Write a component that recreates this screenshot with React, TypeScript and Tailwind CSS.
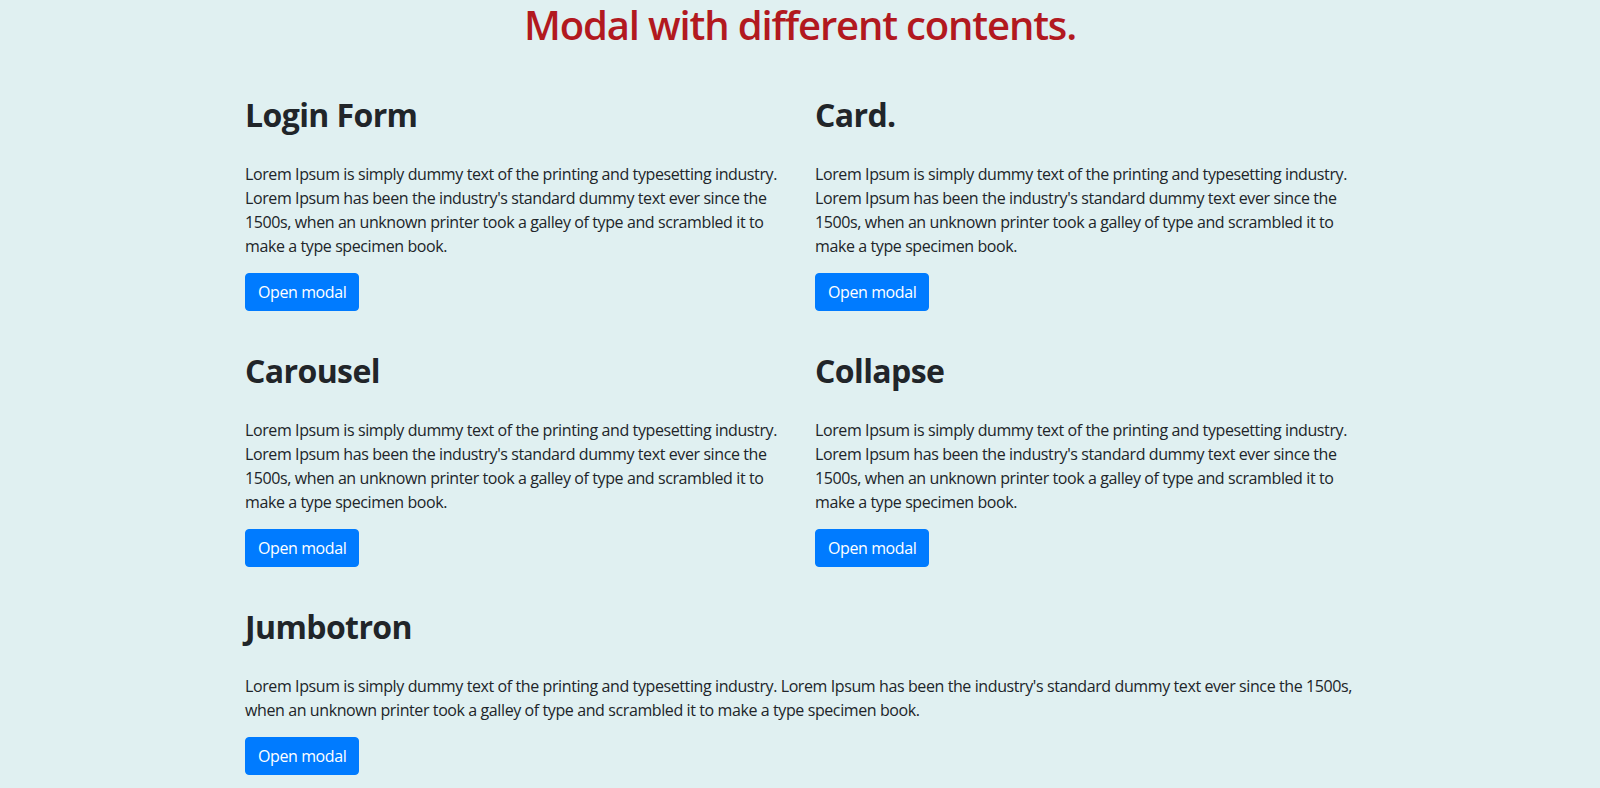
const LOREM =
  "Lorem Ipsum is simply dummy text of the printing and typesetting industry. Lorem Ipsum has been the industry's standard dummy text ever since the 1500s, when an unknown printer took a galley of type and scrambled it to make a type specimen book.";

function Section({ title, wide }: { title: string; wide?: boolean }) {
  return (
    <div className={wide ? "col-span-2" : ""}>
      <h2 className="text-[32px] leading-[38px] font-bold tracking-[-0.6px] text-[#212529]">{title}</h2>
      <p className="mt-[28px] text-[16px] leading-[24px] tracking-[-0.4px] text-[#212529]">{LOREM}</p>
      <button
        type="button"
        className="mt-[15px] h-[38px] px-[12px] rounded-[4px] border border-[#007bff] bg-[#007bff] text-white text-[16px] leading-[24px] tracking-[-0.4px]"
      >
        Open modal
      </button>
    </div>
  );
}

export default function App() {
  return (
    <div
      className="min-h-screen bg-[#e0f0f1] text-[#212529]"
      style={{ fontFamily: '"Open Sans", "Noto Sans", sans-serif' }}
    >
      <div className="w-[1140px] mx-auto px-[15px]">
        <h1 className="pt-[1px] text-center text-[40px] leading-[47px] font-semibold tracking-[-1.15px] text-[#b2191f]">
          Modal with different contents.
        </h1>
        <div className="mt-[48px] grid grid-cols-2 gap-x-[30px] gap-y-[41px]">
          <Section title="Login Form" />
          <Section title="Card." />
          <Section title="Carousel" />
          <Section title="Collapse" />
          <Section title="Jumbotron" wide />
        </div>
      </div>
    </div>
  );
}
